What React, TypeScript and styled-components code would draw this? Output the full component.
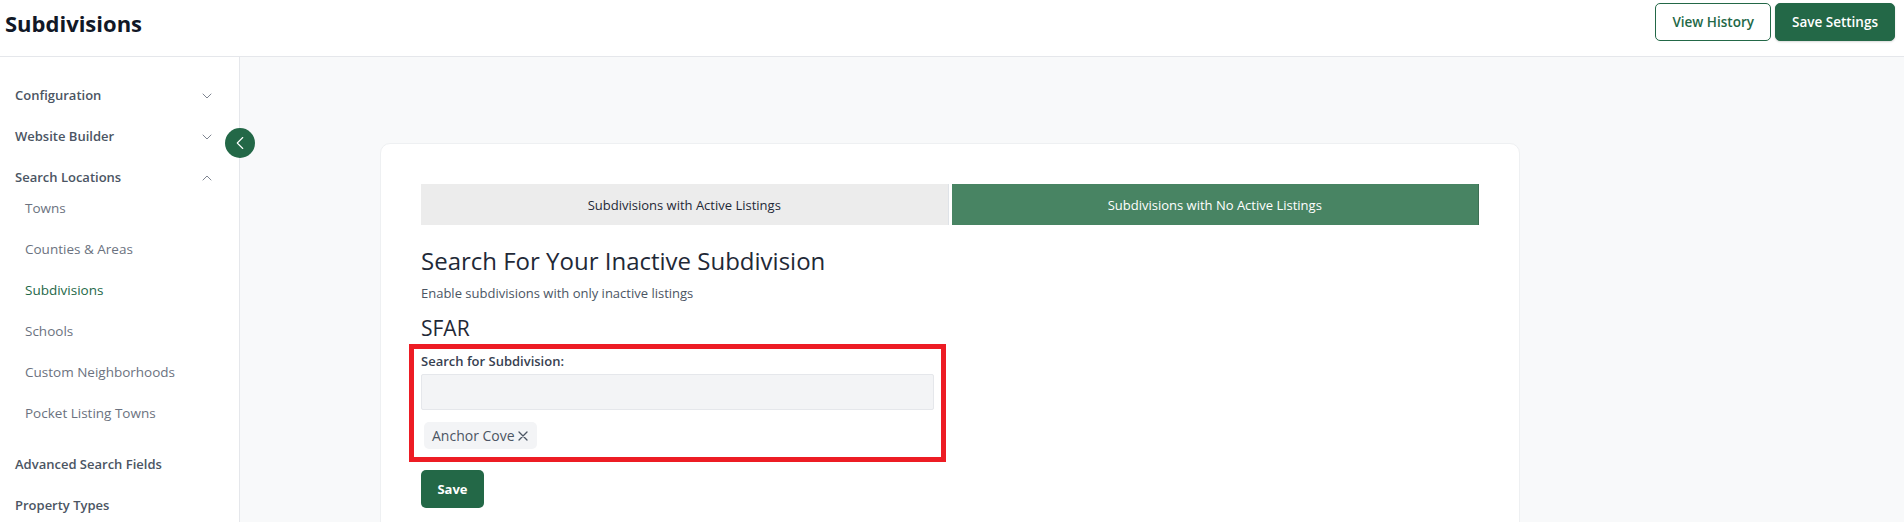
import styled, {createGlobalStyle} from "styled-components";
import {ChevronDown, ChevronUp, ChevronLeft} from "lucide-react";

const GlobalStyle = createGlobalStyle`
  html, body {
    margin: 0;
    padding: 0;
  }
  body {
    font-family: "Open Sans", "Noto Sans", Arial, sans-serif;
    color: #1f2937;
    background: #ffffff;
  }
  * {
    box-sizing: border-box;
  }
`;

type NavEntry = {
    label: string,
    expandable?: boolean,
    open?: boolean,
    children?: { label: string, active?: boolean }[]
}

const nav: NavEntry[] = [
    {label: "Configuration", expandable: true},
    {label: "Website Builder", expandable: true},
    {
        label: "Search Locations",
        expandable: true,
        open: true,
        children: [
            {label: "Towns"},
            {label: "Counties & Areas"},
            {label: "Subdivisions", active: true},
            {label: "Schools"},
            {label: "Custom Neighborhoods"},
            {label: "Pocket Listing Towns"},
        ]
    },
    {label: "Advanced Search Fields"},
    {label: "Property Types"},
];

function App() {
    return (
        <Page>
            <GlobalStyle/>
            <Header>
                <Title>Subdivisions</Title>
                <HeaderActions>
                    <Button variant="outline">View History</Button>
                    <Button variant="solid">Save Settings</Button>
                </HeaderActions>
            </Header>

            <Body>
                <Sidebar>
                    <Nav>
                        {nav.map((entry) => (
                            <div key={entry.label}>
                                <NavItem open={!!entry.open}>
                                    <span>{entry.label}</span>
                                    {entry.expandable && (
                                        entry.open
                                            ? <ChevronUp size={16} strokeWidth={1.3}/>
                                            : <ChevronDown size={16} strokeWidth={1.3}/>
                                    )}
                                </NavItem>
                                {entry.children && (
                                    <SubList>
                                        {entry.children.map((child) => (
                                            <SubItem key={child.label} active={!!child.active}>
                                                {child.label}
                                            </SubItem>
                                        ))}
                                    </SubList>
                                )}
                            </div>
                        ))}
                    </Nav>
                    <CollapseButton aria-label="Collapse sidebar">
                        <ChevronLeft size={22} strokeWidth={1.2}/>
                    </CollapseButton>
                </Sidebar>

                <Main>
                    <Card>
                        <Tabs>
                            <Tab active={false}>Subdivisions with Active Listings</Tab>
                            <Tab active={true}>Subdivisions with No Active Listings</Tab>
                        </Tabs>

                        <Heading>Search For Your Inactive Subdivision</Heading>
                        <Subtitle>Enable subdivisions with only inactive listings</Subtitle>
                        <SectionName>SFAR</SectionName>

                        <FieldGroup>
                            <Label>Search for Subdivision:</Label>
                            <Input type="text"/>
                            <Chips>
                                <Chip>
                                    Anchor Cove
                                    <svg width="10" height="10" viewBox="0 0 10 10">
                                        <path d="M1 1 L9 9 M9 1 L1 9" stroke="#4b5563" strokeWidth="1.3"
                                              strokeLinecap="round"/>
                                    </svg>
                                </Chip>
                            </Chips>
                        </FieldGroup>

                        <SaveButton>Save</SaveButton>
                    </Card>
                </Main>
            </Body>
        </Page>
    );
}

export default App;

const Page = styled.div`
  display: flex;
  flex-direction: column;
  height: 100vh;
  overflow: hidden;
`;

const Header = styled.header`
  display: flex;
  justify-content: space-between;
  align-items: flex-start;
  height: 57px;
  padding: 3px 9px 0 5px;
  border-bottom: 1px solid #e5e7eb;
  background: #ffffff;
  flex-shrink: 0;
`;

const Title = styled.h1`
  margin: 0;
  font-size: 22px;
  font-weight: 700;
  line-height: 40px;
  color: #111827;
`;

const HeaderActions = styled.div`
  display: flex;
  gap: 4px;
`;

type ButtonProps = {
    variant: "outline" | "solid"
}

const Button = styled.button<ButtonProps>`
  height: 38px;
  padding: 0 16px;
  border-radius: 5px;
  font-family: inherit;
  font-size: 13.5px;
  font-weight: 600;
  cursor: pointer;
  border: 1px solid #236847;
  color: ${({variant}) => variant === "solid" ? "#ffffff" : "#236847"};
  background: ${({variant}) => variant === "solid" ? "#236847" : "#ffffff"};
  box-shadow: ${({variant}) => variant === "solid" ? "0 1px 2px rgba(0,0,0,0.15)" : "none"};
`;

const Body = styled.div`
  display: flex;
  flex: 1;
  min-height: 0;
`;

const Sidebar = styled.aside`
  position: relative;
  width: 240px;
  flex-shrink: 0;
  background: #ffffff;
  border-right: 1px solid #e5e7eb;
`;

const Nav = styled.nav`
  display: flex;
  flex-direction: column;
  padding: 18px 24px 0 15px;
`;

const NavItem = styled.div<{ open: boolean }>`
  display: flex;
  justify-content: space-between;
  align-items: center;
  padding: ${({open}) => open ? "10px 0 0" : "10px 0"};
  line-height: 21px;
  font-size: 13px;
  font-weight: 600;
  color: #4b5563;

  svg {
    color: #6b7280;
  }
`;

const SubList = styled.div`
  display: flex;
  flex-direction: column;
  padding-bottom: 10px;
`;

const SubItem = styled.div<{ active: boolean }>`
  padding: 10px 0 10px 10px;
  line-height: 21px;
  font-size: 13.5px;
  color: ${({active}) => active ? "#236847" : "#6b7280"};
`;

const CollapseButton = styled.button`
  position: absolute;
  top: 71px;
  right: -16px;
  width: 30px;
  height: 30px;
  border-radius: 50%;
  border: none;
  padding: 0;
  display: flex;
  align-items: center;
  justify-content: center;
  background: #236847;
  color: #ffffff;
  cursor: pointer;
`;

const Main = styled.main`
  flex: 1;
  background: #f8f9fa;
  padding: 86px 0 0 140px;
`;

const Card = styled.section`
  width: 1140px;
  min-height: 500px;
  padding: 40px;
  background: #ffffff;
  border: 1px solid #eef0f2;
  border-radius: 10px;
`;

const Tabs = styled.div`
  display: grid;
  grid-template-columns: 1fr 1fr;
  gap: 3px;
`;

const Tab = styled.div<{ active: boolean }>`
  height: 41px;
  display: flex;
  align-items: center;
  justify-content: center;
  font-size: 13px;
  color: ${({active}) => active ? "#ffffff" : "#1f2937"};
  background: ${({active}) => active ? "#488463" : "#ececec"};
  border-right: 1px solid ${({active}) => active ? "#3d6f54" : "#dfe3e8"};
`;

const Heading = styled.h2`
  margin: 20px 0 0;
  font-size: 24px;
  font-weight: 400;
  line-height: 32px;
  color: #1f2937;
`;

const Subtitle = styled.p`
  margin: 6px 0 0;
  font-size: 13px;
  line-height: 20px;
  color: #4b5563;
`;

const SectionName = styled.h3`
  margin: 10px 0 0;
  font-size: 21px;
  font-weight: 400;
  line-height: 30px;
  color: #1f2937;
`;

const FieldGroup = styled.div`
  position: relative;
  width: 513px;
  margin-top: 8px;
  padding-bottom: 1px;

  &::after {
    content: "";
    position: absolute;
    top: -7px;
    bottom: -12px;
    left: -12px;
    right: -12px;
    border: 5px solid #ed1c24;
    pointer-events: none;
  }
`;

const Label = styled.label`
  display: block;
  font-size: 13px;
  font-weight: 600;
  line-height: 20px;
  color: #374151;
`;

const Input = styled.input`
  display: block;
  width: 100%;
  height: 36px;
  margin-top: 3px;
  border: 1px solid #e5e7eb;
  border-radius: 2px;
  background: #f3f4f6;
  outline: none;
`;

const Chips = styled.div`
  display: flex;
  gap: 6px;
  margin-top: 12px;
  padding-left: 3px;
`;

const Chip = styled.span`
  display: inline-flex;
  align-items: center;
  gap: 3px;
  height: 27px;
  padding: 0 9px 0 8px;
  border-radius: 5px;
  background: #f3f4f6;
  font-size: 14px;
  color: #4b5563;
`;

const SaveButton = styled.button`
  display: block;
  width: 63px;
  height: 38px;
  margin-top: 20px;
  border: none;
  border-radius: 5px;
  background: #236847;
  color: #ffffff;
  font-family: inherit;
  font-size: 13px;
  font-weight: 700;
  cursor: pointer;
`;
